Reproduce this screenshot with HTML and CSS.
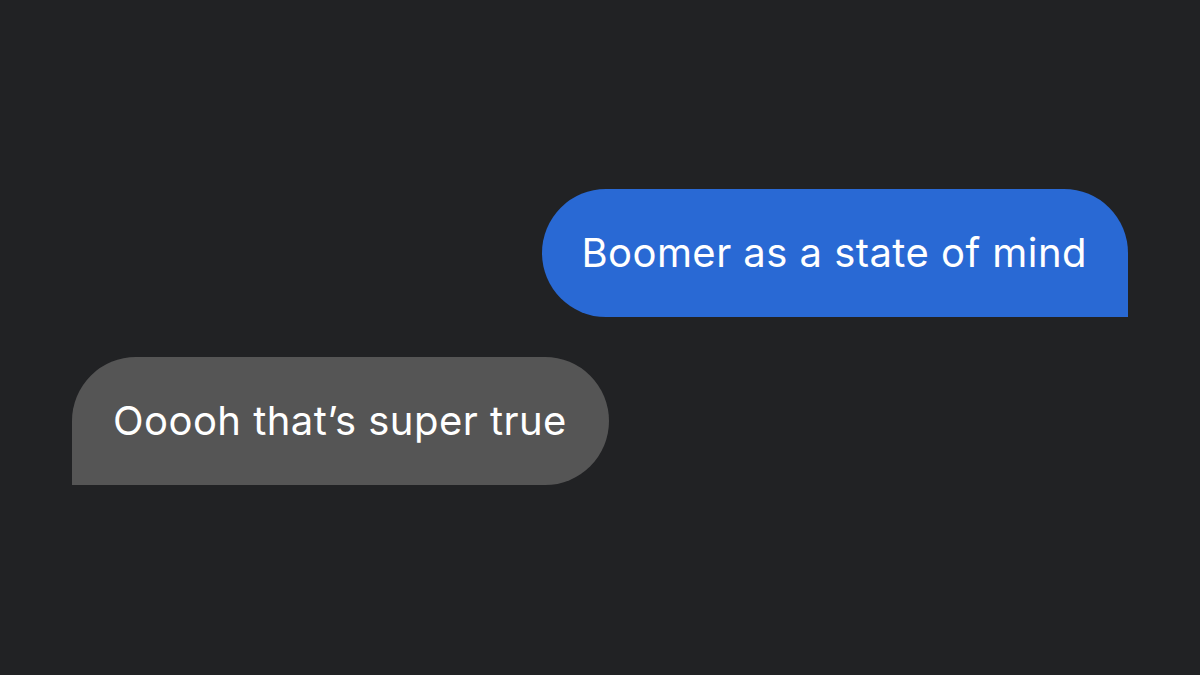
FILE: index.html
```html
<!DOCTYPE html>
<html lang="en">
  <head>
    <meta charset="UTF-8" />
    <meta name="viewport" content="width=device-width, initial-scale=1.0" />
    <title>Chat</title>
    <link rel="stylesheet" href="styles.css">
  </head>

  <body>
    <div class="chat">
      <div class="msg sent">Boomer as a state of mind</div>
      <div class="msg received">Ooooh that’s super true</div>
    </div>
  </body>
</html>
```

FILE: styles.css
```css
html,
body {
  margin: 0;
  height: 100%;
}
body {
  background-color: #212224;
  font-family: Inter, "Noto Sans", sans-serif;
}
.chat {
  display: flex;
  flex-direction: column;
  gap: 40px;
  padding: 189px 72px 0 72px;
}
.msg {
  height: 128px;
  box-sizing: border-box;
  display: flex;
  align-items: center;
  padding: 0 41px 2px 41px;
  font-size: 40px;
  letter-spacing: 0.45px;
  color: #ffffff;
  border-radius: 64px;
}
.sent {
  align-self: flex-end;
  padding: 0 41px 2px 39px;
  background-color: #2969d4;
  border-bottom-right-radius: 0;
}
.received {
  align-self: flex-start;
  padding: 0 42px 2px 41px;
  background-color: #555555;
  border-bottom-left-radius: 0;
}
```
